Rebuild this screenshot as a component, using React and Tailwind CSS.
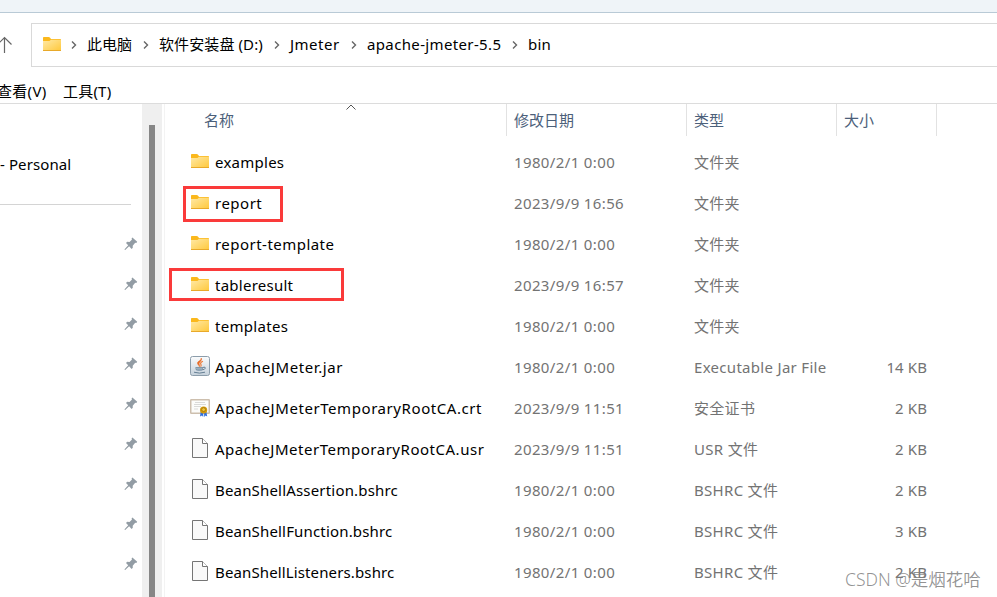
const FONT = "font-['Noto_Sans','Noto_Sans_CJK_SC',sans-serif]";

function Folder({ id }) {
  return (
    <svg width="20" height="20" viewBox="0 0 20 20" className="block">
      <defs>
        <linearGradient id={id} x1="0" y1="0" x2="1" y2="1">
          <stop offset="0" stopColor="#ffe9a6" />
          <stop offset="1" stopColor="#ffc83a" />
        </linearGradient>
      </defs>
      <path d="M1 2.8Q1 2 1.8 2H6.6Q7.4 2 7.9 2.6L9 4H18.2Q19 4 19 4.8V9H1Z" fill="#fbb81c" />
      <path d="M1 6H7.4L9 4.8H19V15.2Q19 16 18.2 16H1.8Q1 16 1 15.2Z" fill={`url(#${id})`} />
      <path d="M1 15.5H19" stroke="#e8a92a" />
    </svg>
  );
}

function Page() {
  return (
    <svg width="20" height="20" viewBox="0 0 20 20" className="block">
      <path d="M2.5.5H12.5L17.5 5.5V19.5H2.5Z" fill="#f9f9f9" stroke="#757575" />
      <path d="M12.5.5V5.5H17.5" fill="#fff" stroke="#757575" />
    </svg>
  );
}

function Jar() {
  return (
    <svg width="20" height="20" viewBox="0 0 20 20" className="block">
      <defs>
        <linearGradient id="jar" x1="0" y1="0" x2="0" y2="1">
          <stop offset="0" stopColor="#fbfcfd" />
          <stop offset="1" stopColor="#c4d0da" />
        </linearGradient>
      </defs>
      <rect x=".5" y=".5" width="19" height="19" rx="2" fill="url(#jar)" stroke="#8c9dab" />
      <path d="M11.2 2C12 4.2 7.3 5.2 7.5 7.2C7.6 8.6 9.2 9.2 9.4 10.7C10 9 8.8 8.2 9.2 7C9.7 5.5 12.4 4.5 11.2 2Z" fill="#ea6b25" stroke="#ea6b25" strokeWidth=".6" />
      <path d="M13 5.3C10.6 6.3 10 7.3 11 8.6C11.5 9.3 11 10 10.6 10.7" fill="none" stroke="#ee8040" strokeWidth="1.2" />
      <path d="M5.5 11H13V13.5Q12.5 15 9.5 15Q6 15 5.5 13Z" fill="#7890a3" />
      <path d="M6 12.3H12.5M6.6 14H12" stroke="#c5d2dc" strokeWidth=".6" />
      <path d="M13 11.4Q15.8 10.6 15.3 12.2Q14.8 13.5 12.8 13.7M4 16.2Q9.5 18 15 16.2" fill="none" stroke="#667f94" strokeWidth="1" />
    </svg>
  );
}

function Certificate() {
  return (
    <svg width="20" height="20" viewBox="0 0 20 20" className="block">
      <rect x=".75" y="2.75" width="18.5" height="13.5" rx=".5" fill="#fcfcfa" stroke="#cdbfae" strokeWidth="1.5" />
      <path d="M5 5.5H15M4 7.5H16M4 9.5H11M4 12H8" stroke="#cbcbc8" strokeWidth=".7" />
      <path d="M10.8 14L10 19.6L12 18.6L13.2 20L13.4 14ZM14 14L14.2 20L15.5 18.6L17.2 19.6L16.2 14Z" fill="#2f6fde" />
      <circle cx="13.6" cy="13" r="3.6" fill="#d29a0b" />
      <circle cx="13.6" cy="12.6" r="1.9" fill="#efc53b" stroke="#9c6b05" strokeWidth=".7" />
    </svg>
  );
}

function Pin() {
  return (
    <svg width="14" height="14" viewBox="0 0 14 14" className="block">
      <path d="M8.4 .5L13.2 4.8L12.3 6L11.2 5.8L8.7 8.7L8.8 10.7L7.6 11.9L5.1 9.3L1.2 13.1L.5 12.8L.8 12L4.2 8.3L2 6L3.2 4.8L5.5 5L8 2.5L7.6 1.4Z" fill="#929ca4" />
    </svg>
  );
}

function Chevron() {
  return (
    <svg width="6" height="10" viewBox="0 0 6 10" className="mt-[2px] block shrink-0">
      <path d="M1 1.5L4.5 5L1 8.5" fill="none" stroke="#666" strokeWidth="1.4" />
    </svg>
  );
}

const rows = [
  ["folder", "examples", "tracking-[.25px]", "1980/2/1 0:00", "文件夹", ""],
  ["folder", "report", "tracking-[.5px]", "2023/9/9 16:56", "文件夹", "", "left-[18px] top-1 w-[100px] h-9"],
  ["folder", "report-template", "tracking-[.47px]", "1980/2/1 0:00", "文件夹", ""],
  ["folder", "tableresult", "tracking-[.25px]", "2023/9/9 16:57", "文件夹", "", "left-1 top-1 w-[175px] h-[33px]"],
  ["folder", "templates", "tracking-[.3px]", "1980/2/1 0:00", "文件夹", ""],
  ["jar", "ApacheJMeter.jar", "tracking-[.6px]", "1980/2/1 0:00", "Executable Jar File", "14 KB"],
  ["crt", "ApacheJMeterTemporaryRootCA.crt", "tracking-[.57px]", "2023/9/9 11:51", "安全证书", "2 KB"],
  ["page", "ApacheJMeterTemporaryRootCA.usr", "tracking-[.52px]", "2023/9/9 11:51", "USR 文件", "2 KB"],
  ["page", "BeanShellAssertion.bshrc", "tracking-[.18px]", "1980/2/1 0:00", "BSHRC 文件", "2 KB"],
  ["page", "BeanShellFunction.bshrc", "tracking-[.17px]", "1980/2/1 0:00", "BSHRC 文件", "3 KB"],
  ["page", "BeanShellListeners.bshrc", "tracking-[.13px]", "1980/2/1 0:00", "BSHRC 文件", "2 KB"],
];

function Row({ row, index }) {
  const [icon, name, tracking, date, type, size, mark] = row;
  return (
    <div className="relative flex h-[41px] shrink-0 items-center text-[#737373]">
      <div className="flex w-[349px] shrink-0 items-center gap-[5px] pl-[25px] text-black">
        {icon === "folder" && <div className="mt-px"><Folder id={`folder${index}`} /></div>}
        {icon !== "folder" && (
          <div className="-mt-px">
            {icon === "jar" && <Jar />}
            {icon === "crt" && <Certificate />}
            {icon === "page" && <Page />}
          </div>
        )}
        <span className={tracking}>{name}</span>
      </div>
      <span className="w-[180px] shrink-0 tracking-[.37px]">{date}</span>
      <span className="w-[150px] shrink-0 tracking-[.3px]">{type}</span>
      <span className="w-[83px] shrink-0 text-right tracking-[.1px]">{size}</span>
      {mark && <div className={`absolute border-3 border-[#fa3a3a] ${mark}`} />}
    </div>
  );
}

export default function App() {
  return (
    <div className={`relative flex h-[597px] w-[997px] flex-col overflow-hidden bg-white text-[15px] leading-5 whitespace-nowrap text-black ${FONT}`}>
      <div className="h-[13px] shrink-0 border-b border-[#b9cad6] bg-[#eff4f8]" />
      <div className="flex h-[54px] shrink-0 pt-[10px]">
        <div className="flex w-[31px] shrink-0 items-center">
          <svg width="13" height="18" viewBox="0 0 13 18" className="block">
            <path d="M4.5 17V1.5M-2.5 8.5L4.5 1.5L11.5 8.5" fill="none" stroke="#666" strokeWidth="1.2" />
          </svg>
        </div>
        <div className="flex flex-1 items-center border border-r-0 border-[#d9d9d9] pl-[10px]">
          <Folder id="crumb" />
          <div className="ml-[9px] flex items-center pb-[2px]">
            <Chevron /><span className="ml-[10px] w-[56px]">此电脑</span>
            <Chevron /><span className="ml-[10px] w-[115px] tracking-[.1px]">软件安装盘 (D:)</span>
            <Chevron /><span className="ml-[10px] w-[61px] tracking-[.5px]">Jmeter</span>
            <Chevron /><span className="ml-[10px] w-[145px] tracking-[.36px]">apache-jmeter-5.5</span>
            <Chevron /><span className="ml-[10px] tracking-[.2px]">bin</span>
          </div>
        </div>
      </div>
      <div className="flex h-[37px] shrink-0 items-end border-b border-[#dcdcdc] pb-[2px]">
        <span className="-ml-[3px] w-[66px] tracking-[.3px]">查看(V)</span>
        <span className="tracking-[.2px]">工具(T)</span>
      </div>
      <div className="flex min-h-0 flex-1">
        <div className="w-[142px] shrink-0">
          <div className="mr-[11px] flex h-[101px] items-center border-b border-[#d4d4d4] pt-5 tracking-[.1px]">- Personal</div>
          <div className="flex flex-col items-end gap-[26px] pt-8 pr-1">
            {[0, 1, 2, 3, 4, 5, 6, 7, 8].map((n) => <Pin key={n} />)}
          </div>
        </div>
        <div className="w-5 shrink-0 bg-[#efefef] pt-[21px] pl-[7px]">
          <div className="h-full w-[6px] bg-[#868686]" />
        </div>
        <div className="ml-[2px] flex min-w-0 flex-1 flex-col border-l border-[#f3f3f3]">
          <div className="relative flex h-[37px] shrink-0 items-start text-[#4c607a]">
            <div className="flex h-8 w-[342px] shrink-0 items-center border-r border-[#e2e2e2] pl-[39px]">名称</div>
            <div className="flex h-8 w-[180px] shrink-0 items-center border-r border-[#e2e2e2] pl-[7px]">修改日期</div>
            <div className="flex h-8 w-[150px] shrink-0 items-center border-r border-[#e2e2e2] pl-[7px]">类型</div>
            <div className="flex h-8 w-[100px] shrink-0 items-center border-r border-[#e2e2e2] pl-[7px]">大小</div>
            <svg width="12" height="7" viewBox="0 0 12 7" className="absolute top-0 left-[180px]">
              <path d="M1.5 5.5L6 1L10.5 5.5" fill="none" stroke="#555" />
            </svg>
          </div>
          {rows.map((row, i) => <Row key={row[1]} row={row} index={i} />)}
        </div>
      </div>
      <div className="absolute top-[567px] left-[845px] text-[17.5px] leading-6 font-[350] text-[#808080]/85">CSDN @是烟花哈</div>
    </div>
  );
}
